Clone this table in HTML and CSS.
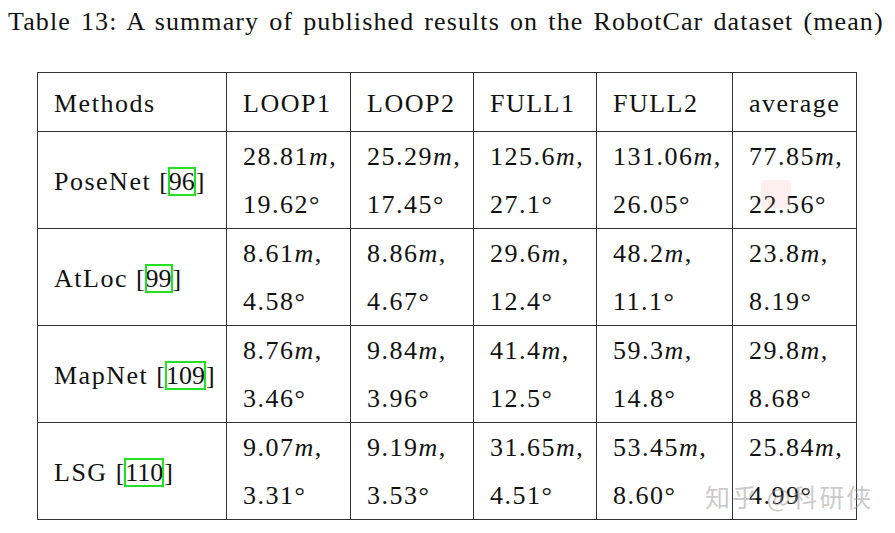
FILE: index.html
```html
<!DOCTYPE html>
<html>
<head>
<meta charset="utf-8">
<link rel="stylesheet" href="styles.css">
</head>
<body>
<div class="page">
  <p class="caption">Table 13: A summary of published results on the RobotCar dataset (mean)</p>
  <table class="results">
    <colgroup>
      <col class="c-method"><col class="c-a"><col class="c-b"><col class="c-c"><col class="c-d"><col class="c-e">
    </colgroup>
    <thead>
      <tr class="head">
        <td>Methods</td><td>LOOP1</td><td>LOOP2</td><td>FULL1</td><td>FULL2</td><td>average</td>
      </tr>
    </thead>
    <tbody>
      <tr>
        <td class="method">PoseNet <span class="cite">[<span class="ref">96</span>]</span></td>
        <td><div class="l1">28.81<i>m</i>,</div><div class="l2">19.62°</div></td>
        <td><div class="l1">25.29<i>m</i>,</div><div class="l2">17.45°</div></td>
        <td><div class="l1">125.6<i>m</i>,</div><div class="l2">27.1°</div></td>
        <td><div class="l1">131.06<i>m</i>,</div><div class="l2">26.05°</div></td>
        <td class="last"><div class="l1">77.85<i>m</i>,</div><div class="l2">22.56°</div><span class="pink"></span></td>
      </tr>
      <tr>
        <td class="method">AtLoc <span class="cite">[<span class="ref">99</span>]</span></td>
        <td><div class="l1">8.61<i>m</i>,</div><div class="l2">4.58°</div></td>
        <td><div class="l1">8.86<i>m</i>,</div><div class="l2">4.67°</div></td>
        <td><div class="l1">29.6<i>m</i>,</div><div class="l2">12.4°</div></td>
        <td><div class="l1">48.2<i>m</i>,</div><div class="l2">11.1°</div></td>
        <td class="last"><div class="l1">23.8<i>m</i>,</div><div class="l2">8.19°</div></td>
      </tr>
      <tr>
        <td class="method">MapNet <span class="cite">[<span class="ref">109</span>]</span></td>
        <td><div class="l1">8.76<i>m</i>,</div><div class="l2">3.46°</div></td>
        <td><div class="l1">9.84<i>m</i>,</div><div class="l2">3.96°</div></td>
        <td><div class="l1">41.4<i>m</i>,</div><div class="l2">12.5°</div></td>
        <td><div class="l1">59.3<i>m</i>,</div><div class="l2">14.8°</div></td>
        <td class="last"><div class="l1">29.8<i>m</i>,</div><div class="l2">8.68°</div></td>
      </tr>
      <tr>
        <td class="method">LSG <span class="cite">[<span class="ref">110</span>]</span></td>
        <td><div class="l1">9.07<i>m</i>,</div><div class="l2">3.31°</div></td>
        <td><div class="l1">9.19<i>m</i>,</div><div class="l2">3.53°</div></td>
        <td><div class="l1">31.65<i>m</i>,</div><div class="l2">4.51°</div></td>
        <td><div class="l1">53.45<i>m</i>,</div><div class="l2">8.60°</div></td>
        <td class="last"><div class="l1">25.84<i>m</i>,</div><div class="l2">4.99°</div></td>
      </tr>
    </tbody>
  </table>
  <div class="watermark">知乎 @科研侠</div>
</div>
</body>
</html>
```
FILE: styles.css
```css
html, body {
  margin: 0;
  padding: 0;
  background: #ffffff;
}
.page {
  position: relative;
  width: 895px;
  height: 533px;
  overflow: hidden;
  font-family: "Liberation Serif", "Times New Roman", serif;
  color: #111;
}
.caption {
  margin: 0;
  padding: 8px 0 0 8px;
  font-size: 26px;
  line-height: 28px;
  letter-spacing: 1.1px;
  word-spacing: 2.5px;
  white-space: nowrap;
}
.results {
  margin: 36px 0 0 37px;
  border-collapse: collapse;
  table-layout: fixed;
  width: 819px;
  font-size: 26px;
  letter-spacing: 1.5px;
}
.c-method { width: 189px; }
.c-a { width: 124px; }
.c-b { width: 123px; }
.c-c { width: 123px; }
.c-d { width: 136px; }
.c-e { width: 124px; }
.results td {
  border: 1.5px solid #333;
  padding: 0 0 0 16px;
  vertical-align: top;
  white-space: nowrap;
  position: relative;
}
.results .head td {
  height: 55px;
  vertical-align: middle;
  padding-top: 3px;
}
.results tbody td {
  height: 92px;
}
.results td.method {
  vertical-align: middle;
  padding-top: 4px;
}
.l1 {
  margin-top: 10px;
  line-height: 30px;
}
.l2 {
  margin-top: 18px;
  line-height: 30px;
}
i {
  font-style: italic;
}
.cite {
  letter-spacing: 0;
}
.ref {
  outline: 2px solid #22e022;
  outline-offset: -2px;
  padding: 0 1px;
}
.pink {
  position: absolute;
  left: 28px;
  top: 48px;
  width: 30px;
  height: 28px;
  border-radius: 4px;
  background: rgba(240, 120, 130, 0.12);
}
.watermark {
  position: absolute;
  left: 705px;
  top: 478px;
  font-family: "Noto Sans CJK SC", sans-serif;
  font-size: 25px;
  color: rgba(150, 150, 150, 0.5);
  letter-spacing: 2px;
}
```
